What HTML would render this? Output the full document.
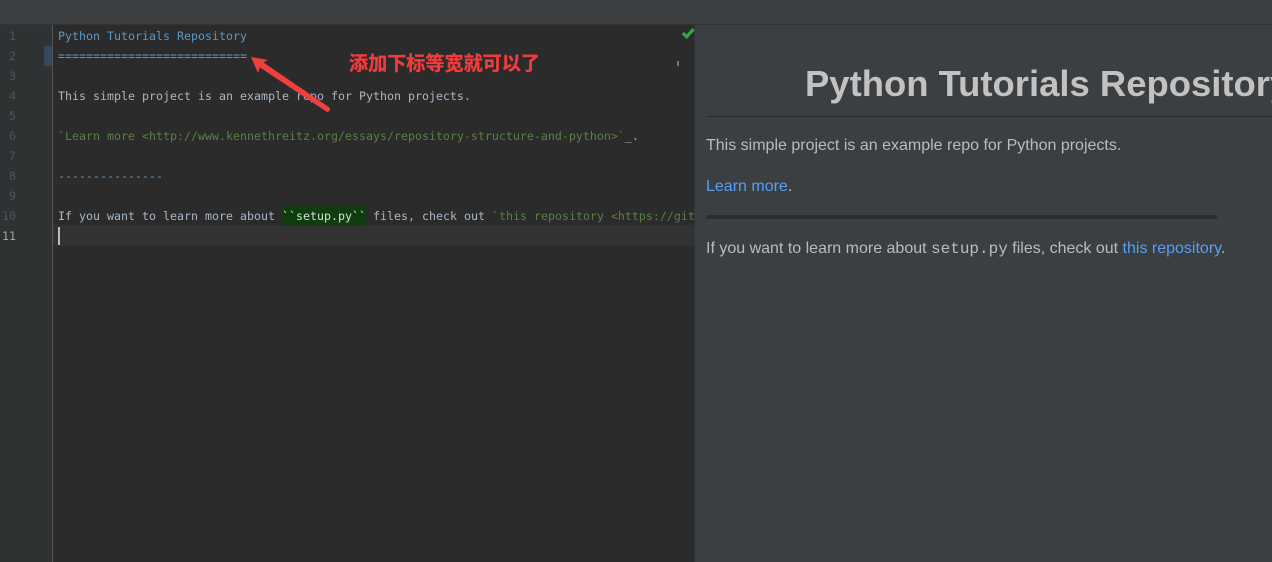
<!DOCTYPE html>
<html><head><meta charset="utf-8">
<style>
html,body{margin:0;padding:0;background:#3c3f41;}
#root{position:relative;width:1272px;height:562px;overflow:hidden;background:#3c3f41;font-family:"Liberation Sans",sans-serif;}
.abs{position:absolute;}
.top{left:0;top:0;width:1272px;height:25px;background:#3c3f41;border-bottom:1px solid #323232;box-sizing:border-box;}
.gutter{left:0;top:25px;width:52px;height:537px;background:#2f3233;border-right:1px solid #555;}
.editor{left:53px;top:25px;width:642px;height:537px;background:#2b2b2b;overflow:hidden;}
.cur{left:53px;top:225px;width:642px;height:21px;background:#323232;}
.gcur{left:0;top:225px;width:52px;height:21px;background:#2f3233;}
.num{position:absolute;font:11.6px/20px "DejaVu Sans Mono",monospace;color:#4d5557;width:16px;text-align:right;left:0;}
.l{position:absolute;left:58px;font:11.63px/20px "DejaVu Sans Mono",monospace;letter-spacing:0;color:#a9b7c6;white-space:pre;}
.b{color:#5c97c4}.g{color:#5b7f45}
.prev{left:695px;top:26px;width:577px;height:536px;background:#3c3f41;overflow:hidden;}
p{position:absolute;margin:0;left:706px;font-size:16px;line-height:20px;color:#bbbbbb;white-space:nowrap;}
a{color:#589df6;text-decoration:none;}
code{font-family:"Liberation Mono",monospace;font-size:16px;}
</style></head><body>
<div id="root">
<div class="abs top"></div>
<div class="abs gutter"></div>
<div class="abs gcur"></div>
<div class="abs" style="left:44px;top:46px;width:8px;height:20px;background:#34495e;border-radius:2px"></div>
<div class="abs editor"></div>
<div class="abs cur"></div>
<div class="abs" style="left:281px;top:206px;width:85px;height:20px;background:#0f3d0f;border-radius:1px"></div>
<div class="num" style="top:26px">1</div>
<div class="num" style="top:46px">2</div>
<div class="num" style="top:66px">3</div>
<div class="num" style="top:86px">4</div>
<div class="num" style="top:106px">5</div>
<div class="num" style="top:126px">6</div>
<div class="num" style="top:146px">7</div>
<div class="num" style="top:166px">8</div>
<div class="num" style="top:186px">9</div>
<div class="num" style="top:206px">10</div>
<div class="num" style="top:226px;color:#a4a3a3">11</div>
<div class="l b" style="top:26px">Python Tutorials Repository</div>
<div class="l b" style="top:46px">===========================</div>
<div class="l" style="top:86px">This simple project is an example repo for Python projects.</div>
<div class="l g" style="top:126px">`Learn more &lt;http://www.kennethreitz.org/essays/repository-structure-and-python&gt;`<span style="color:#a9b7c6">_.</span></div>
<div class="l b" style="top:166px">---------------</div>
<div class="l" style="top:206px;width:636px;overflow:hidden">If you want to learn more about <span style="color:#d5e0d5">``setup.py``</span> files, check out <span class="g">`this repository &lt;https://github.com/</span></div>
<div class="abs" style="left:58px;top:227px;width:2px;height:18px;background:#bbbbbb"></div>
<div class="abs" style="left:677px;top:61px;width:2px;height:5px;background:#4a80b8"></div>
<div class="abs" style="left:694px;top:26px;width:1px;height:536px;background:#333537"></div>
<svg class="abs" style="left:0;top:0;z-index:3" width="1272" height="562" viewBox="0 0 1272 562"><path d="M682.8 33L686.6 36.8L693.6 29" fill="none" stroke="#3fa14a" stroke-width="3.2"/><path d="M251 57L268 60L263.5 62.5L329.5 107.5Q331 111.5 327 112L260 67.5L258 73Z" fill="#ef3f3f"/></svg>
<div class="abs prev">
  <div class="abs" style="left:11px;top:90px;width:566px;height:1px;background:#2b2b2b"></div>
  <div class="abs" style="left:11px;top:189px;width:511px;height:4px;background:#2d2d2f"></div>
</div>
<div class="abs" style="left:805px;top:63px;font-size:36.45px;line-height:42px;font-weight:bold;color:#c2c2c2;white-space:nowrap">Python Tutorials Repository</div>
<p style="top:136px">This simple project is an example repo for Python projects.</p>
<p style="top:177px"><a>Learn more</a>.</p>
<p style="top:239px">If you want to learn more about <code>setup.py</code> files, check out <a>this repository</a>.</p>
<div class="abs" style="left:349px;top:50px;font:bold 19.1px/24px 'Noto Sans CJK SC',sans-serif;color:#f03c3c;-webkit-text-stroke:0.35px #f03c3c;white-space:nowrap">添加下标等宽就可以了</div>
</div>
</body></html>
